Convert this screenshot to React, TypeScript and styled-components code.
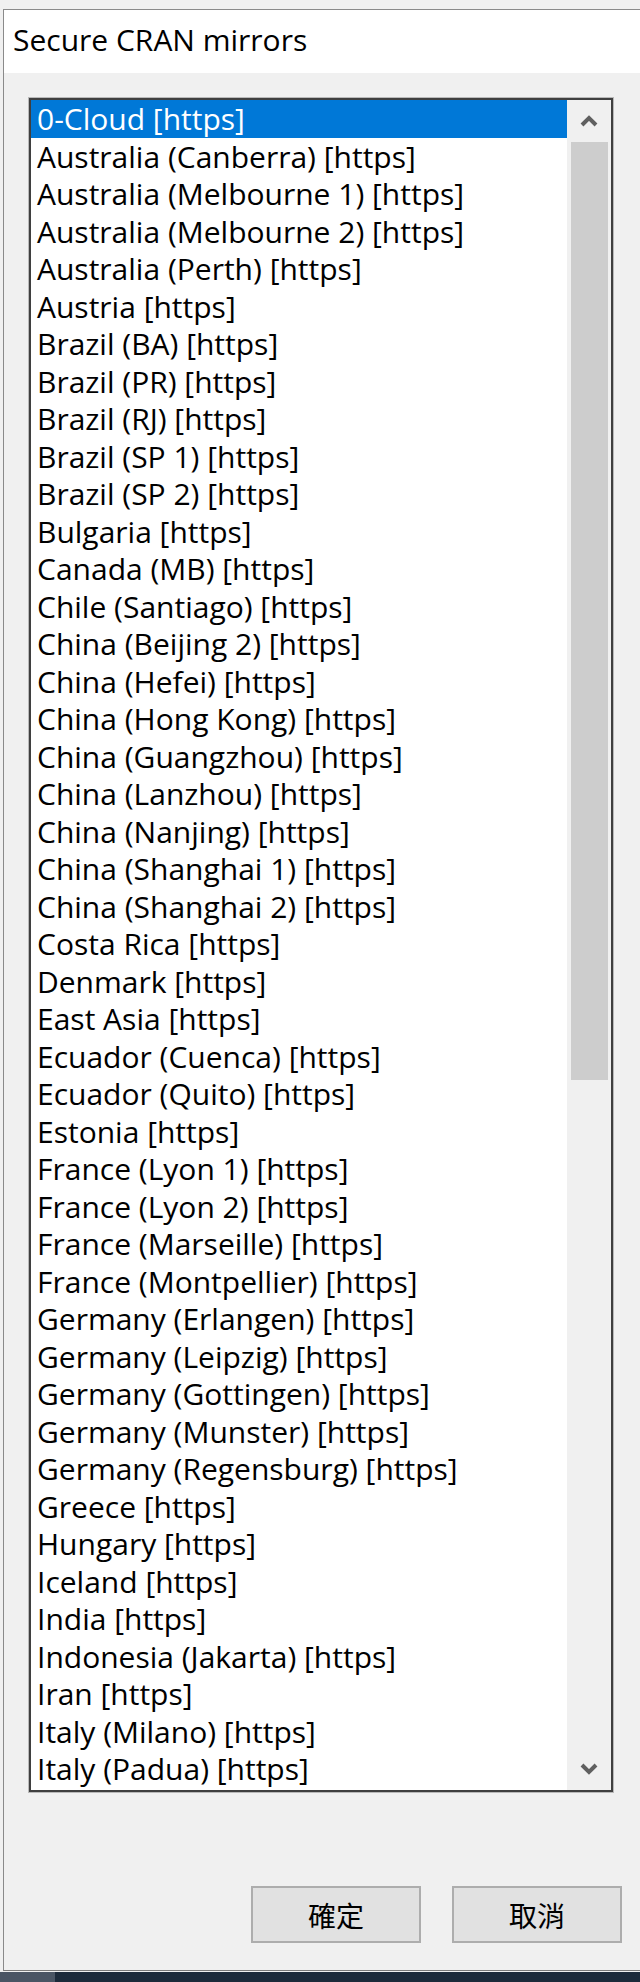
import React from "react";
import styled, { createGlobalStyle } from "styled-components";

const mirrors = [
  "0-Cloud [https]",
  "Australia (Canberra) [https]",
  "Australia (Melbourne 1) [https]",
  "Australia (Melbourne 2) [https]",
  "Australia (Perth) [https]",
  "Austria [https]",
  "Brazil (BA) [https]",
  "Brazil (PR) [https]",
  "Brazil (RJ) [https]",
  "Brazil (SP 1) [https]",
  "Brazil (SP 2) [https]",
  "Bulgaria [https]",
  "Canada (MB) [https]",
  "Chile (Santiago) [https]",
  "China (Beijing 2) [https]",
  "China (Hefei) [https]",
  "China (Hong Kong) [https]",
  "China (Guangzhou) [https]",
  "China (Lanzhou) [https]",
  "China (Nanjing) [https]",
  "China (Shanghai 1) [https]",
  "China (Shanghai 2) [https]",
  "Costa Rica [https]",
  "Denmark [https]",
  "East Asia [https]",
  "Ecuador (Cuenca) [https]",
  "Ecuador (Quito) [https]",
  "Estonia [https]",
  "France (Lyon 1) [https]",
  "France (Lyon 2) [https]",
  "France (Marseille) [https]",
  "France (Montpellier) [https]",
  "Germany (Erlangen) [https]",
  "Germany (Leipzig) [https]",
  "Germany (Gottingen) [https]",
  "Germany (Munster) [https]",
  "Germany (Regensburg) [https]",
  "Greece [https]",
  "Hungary [https]",
  "Iceland [https]",
  "India [https]",
  "Indonesia (Jakarta) [https]",
  "Iran [https]",
  "Italy (Milano) [https]",
  "Italy (Padua) [https]",
];

const GlobalStyle = createGlobalStyle`
  html, body {
    margin: 0;
    padding: 0;
    background: #f0f0f0;
  }
  * {
    box-sizing: border-box;
  }
`;

const Screen = styled.div`
  width: 640px;
  height: 1982px;
  display: flex;
  flex-direction: column;
  background: #f0f0f0;
  overflow: hidden;
  font-family: "Open Sans", "Noto Sans", sans-serif;
`;

const Window = styled.div`
  flex: 1;
  display: flex;
  flex-direction: column;
  margin: 9px 0 0 3px;
  border-left: 1px solid #8a8a8a;
  border-top: 1px solid #8a8a8a;
  border-bottom: 1px solid #7a7a7a;
  background: #f0f0f0;
`;

const TitleBar = styled.div`
  height: 63px;
  display: flex;
  align-items: center;
  padding: 0 0 4px 9px;
  background: #ffffff;
  font-size: 30px;
  color: #000;
`;

const Body = styled.div`
  flex: 1;
  display: flex;
  flex-direction: column;
  padding: 25px 18px 27px 25px;
`;

const ListBox = styled.div`
  height: 1694px;
  width: 584px;
  display: flex;
  border: 2px solid #3f3f3f;
  box-shadow: 0 0 0 1px #b9b9b9;
  background: #fff;
`;

const Items = styled.div`
  flex: 1;
  display: flex;
  flex-direction: column;
`;

const Item = styled.div<{ $selected?: boolean }>`
  height: 37.5px;
  line-height: 37.5px;
  padding-left: 6px;
  font-size: 30px;
  white-space: nowrap;
  color: ${(p) => (p.$selected ? "#ffffff" : "#000000")};
  background: ${(p) => (p.$selected ? "#0078d7" : "transparent")};
`;

const ScrollBar = styled.div`
  width: 44px;
  display: flex;
  flex-direction: column;
  background: #f0f0f0;
`;

const ArrowButton = styled.div`
  height: 42px;
  display: flex;
  align-items: center;
  justify-content: center;
`;

const Track = styled.div`
  flex: 1;
  padding: 0 3px 0 4px;
`;

const Thumb = styled.div`
  height: 938px;
  background: #cdcdcd;
`;

const Footer = styled.div`
  margin-top: auto;
  display: flex;
  justify-content: flex-end;
  gap: 31px;
`;

const DialogButton = styled.button`
  width: 170px;
  height: 57px;
  padding: 0;
  background: #e1e1e1;
  border: 2px solid #adadad;
  font-family: "Noto Sans CJK TC", "Noto Sans", sans-serif;
  font-size: 28px;
  color: #000;
`;

const Taskbar = styled.div`
  height: 10px;
  margin-top: 1px;
  display: flex;
  background: #1c2a3a;
`;

const TaskbarStart = styled.div`
  width: 55px;
  background: #4a5564;
`;

const Chevron: React.FC<{ down?: boolean }> = ({ down }) => (
  <svg width="18" height="12" viewBox="0 0 18 12">
    <polyline
      points={down ? "2,2 9,9 16,2" : "2,10 9,3 16,10"}
      fill="none"
      stroke="#606060"
      strokeWidth="4"
    />
  </svg>
);

export default function App() {
  return (
    <>
      <GlobalStyle />
      <Screen>
        <Window>
          <TitleBar>Secure CRAN mirrors</TitleBar>
          <Body>
            <ListBox>
              <Items>
                {mirrors.map((m, i) => (
                  <Item key={m} $selected={i === 0}>
                    {m}
                  </Item>
                ))}
              </Items>
              <ScrollBar>
                <ArrowButton>
                  <Chevron />
                </ArrowButton>
                <Track>
                  <Thumb />
                </Track>
                <ArrowButton>
                  <Chevron down />
                </ArrowButton>
              </ScrollBar>
            </ListBox>
            <Footer>
              <DialogButton>確定</DialogButton>
              <DialogButton>取消</DialogButton>
            </Footer>
          </Body>
        </Window>
        <Taskbar>
          <TaskbarStart />
        </Taskbar>
      </Screen>
    </>
  );
}
